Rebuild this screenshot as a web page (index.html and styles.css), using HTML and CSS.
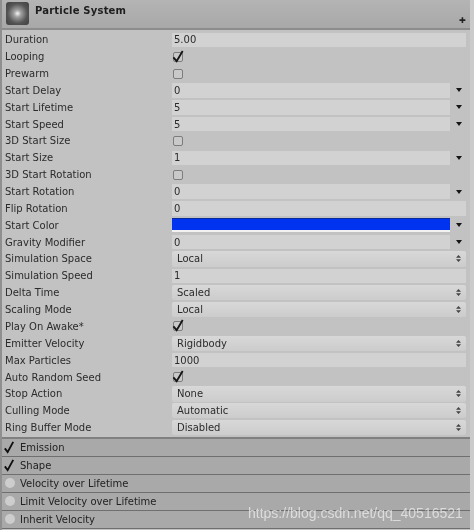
FILE: index.html
```html
<!DOCTYPE html>
<html lang="en">
<head>
<meta charset="utf-8">
<title>Particle System</title>
<link rel="stylesheet" href="styles.css">
</head>
<body>
<div class="panel">
  <header class="head">
    <div class="thumb"></div>
    <div class="title">Particle System</div>
    <div class="plus">✚</div>
  </header>
  <section class="rows">
    <div class="row"><span class="label">Duration</span><span class="field">5.00</span></div>
    <div class="row"><span class="label">Looping</span><span class="check on"><svg viewBox="0 0 14 14"><path d="M1.500 8 5 12 11.500 1"/></svg></span></div>
    <div class="row"><span class="label">Prewarm</span><span class="check"></span></div>
    <div class="row"><span class="label">Start Delay</span><span class="field short">0</span><span class="drop"></span></div>
    <div class="row"><span class="label">Start Lifetime</span><span class="field short">5</span><span class="drop"></span></div>
    <div class="row"><span class="label">Start Speed</span><span class="field short">5</span><span class="drop"></span></div>
    <div class="row"><span class="label">3D Start Size</span><span class="check"></span></div>
    <div class="row"><span class="label">Start Size</span><span class="field short">1</span><span class="drop"></span></div>
    <div class="row"><span class="label">3D Start Rotation</span><span class="check"></span></div>
    <div class="row"><span class="label">Start Rotation</span><span class="field short">0</span><span class="drop"></span></div>
    <div class="row"><span class="label">Flip Rotation</span><span class="field">0</span></div>
    <div class="row"><span class="label">Start Color</span><span class="color"></span><span class="drop"></span></div>
    <div class="row"><span class="label">Gravity Modifier</span><span class="field short">0</span><span class="drop"></span></div>
    <div class="row"><span class="label">Simulation Space</span><span class="field select">Local<svg class="updown" viewBox="0 0 7 10"><path d="M3.500 0 7 4H0zM0 6h7l-3.500 4z"/></svg></span></div>
    <div class="row"><span class="label">Simulation Speed</span><span class="field">1</span></div>
    <div class="row"><span class="label">Delta Time</span><span class="field select">Scaled<svg class="updown" viewBox="0 0 7 10"><path d="M3.500 0 7 4H0zM0 6h7l-3.500 4z"/></svg></span></div>
    <div class="row"><span class="label">Scaling Mode</span><span class="field select">Local<svg class="updown" viewBox="0 0 7 10"><path d="M3.500 0 7 4H0zM0 6h7l-3.500 4z"/></svg></span></div>
    <div class="row"><span class="label">Play On Awake*</span><span class="check on"><svg viewBox="0 0 14 14"><path d="M1.500 8 5 12 11.500 1"/></svg></span></div>
    <div class="row"><span class="label">Emitter Velocity</span><span class="field select">Rigidbody<svg class="updown" viewBox="0 0 7 10"><path d="M3.500 0 7 4H0zM0 6h7l-3.500 4z"/></svg></span></div>
    <div class="row"><span class="label">Max Particles</span><span class="field">1000</span></div>
    <div class="row"><span class="label">Auto Random Seed</span><span class="check on"><svg viewBox="0 0 14 14"><path d="M1.500 8 5 12 11.500 1"/></svg></span></div>
    <div class="row"><span class="label">Stop Action</span><span class="field select">None<svg class="updown" viewBox="0 0 7 10"><path d="M3.500 0 7 4H0zM0 6h7l-3.500 4z"/></svg></span></div>
    <div class="row"><span class="label">Culling Mode</span><span class="field select">Automatic<svg class="updown" viewBox="0 0 7 10"><path d="M3.500 0 7 4H0zM0 6h7l-3.500 4z"/></svg></span></div>
    <div class="row"><span class="label">Ring Buffer Mode</span><span class="field select">Disabled<svg class="updown" viewBox="0 0 7 10"><path d="M3.500 0 7 4H0zM0 6h7l-3.500 4z"/></svg></span></div>
  </section>
  <section class="modules">
    <div class="module"><span class="mark"><svg viewBox="0 0 14 14"><path d="M2 8 5 12 11 1"/></svg></span>Emission</div>
    <div class="module"><span class="mark"><svg viewBox="0 0 14 14"><path d="M2 8 5 12 11 1"/></svg></span>Shape</div>
    <div class="module"><span class="mark"><i class="dot"></i></span>Velocity over Lifetime</div>
    <div class="module"><span class="mark"><i class="dot"></i></span>Limit Velocity over Lifetime</div>
    <div class="module"><span class="mark"><i class="dot"></i></span>Inherit Velocity</div>
  </section>
  <div class="watermark">https://blog.csdn.net/qq_40516521</div>
</div>
</body>
</html>
```
FILE: styles.css
```css
html, body {
  margin: 0;
  padding: 0;
  background: #c4c4c4;
}
.panel {
  position: relative;
  width: 474px;
  height: 530px;
  overflow: hidden;
  box-sizing: border-box;
  border-left: 2px solid #8f8f8f;
  border-right: 4px solid #cbcbcb;
  background: #c2c2c2;
  font-family: "DejaVu Sans", sans-serif;
  font-size: 10px;
  color: #2b2b2b;
  filter: blur(0.35px);
}
.head {
  display: flex;
  align-items: flex-start;
  height: 30px;
  box-sizing: border-box;
  padding: 2px 4px 0 4px;
  background: linear-gradient(#b4b4b4, #a8a8a8);
  border-bottom: 2px solid #8c8c8c;
}
.thumb {
  width: 23px;
  height: 23px;
  border-radius: 3px;
  background: radial-gradient(circle, #f4f4f4 0, #a0a0a0 22%, #555 60%, #3e3e3e 100%);
}
.title {
  margin: 3px 0 0 6px;
  flex: 1;
  font-weight: bold;
  font-size: 10px;
  letter-spacing: 0.2px;
  color: #1e1e1e;
}
.plus {
  margin-top: 14px;
  font-size: 8px;
  line-height: 9px;
  color: #222;
}
.rows {
  padding-top: 1.400px;
}
.row {
  display: flex;
  align-items: center;
  height: 16.870px;
}
.label {
  width: 170px;
  flex: none;
  padding-left: 3px;
  box-sizing: border-box;
  white-space: nowrap;
}
.field {
  display: flex;
  align-items: center;
  justify-content: space-between;
  box-sizing: border-box;
  width: 294px;
  height: 14.500px;
  padding: 0 5px 0 2px;
  background: #d2d2d2;
}
.short {
  width: 278px;
}
.select {
  padding-left: 5px;
  padding-right: 5px;
  height: 15.500px;
  border-radius: 2px;
  background: linear-gradient(#d8d8d8, #cccccc);
}
.updown {
  width: 5px;
  height: 9px;
  fill: #444;
}
.drop {
  width: 0;
  height: 0;
  margin-left: 6px;
  border-left: 3px solid transparent;
  border-right: 3px solid transparent;
  border-top: 4px solid #151515;
}
.check {
  position: relative;
  box-sizing: border-box;
  width: 10px;
  height: 10px;
  margin-left: 1px;
  border: 1px solid #7d7d7d;
  border-radius: 2px;
  background: #c9c9c9;
}
.check svg {
  position: absolute;
  left: -2px;
  top: -3px;
  width: 13px;
  height: 13px;
}
.check svg, .mark svg {
  fill: none;
  stroke: #151515;
  stroke-width: 2;
}
.color {
  box-sizing: border-box;
  width: 278px;
  height: 14px;
  background: #0033f0;
  border-top: 1px solid #0a2a9a;
  border-bottom: 2px solid #f2f2f2;
}
.modules {
  border-top: 2px solid #808080;
  margin-top: 0.500px;
}
.module {
  display: flex;
  align-items: center;
  height: 17px;
  margin-bottom: 1px;
  background: #a9a9a9;
  box-shadow: 0 1px 0 #6f6f6f;
  color: #222;
}
.mark {
  display: flex;
  align-items: center;
  justify-content: center;
  width: 13px;
  height: 13px;
  margin: 0 4px 0 1px;
}
.mark svg {
  width: 13px;
  height: 13px;
  stroke: #0f0f0f;
}
.dot {
  width: 10px;
  height: 10px;
  border-radius: 50%;
  background: #cdcdcd;
}
.watermark {
  position: absolute;
  left: 246px;
  top: 505px;
  font-family: "Liberation Sans", sans-serif;
  font-size: 14px;
  white-space: nowrap;
  color: rgba(232, 232, 232, 0.8);
}
```
